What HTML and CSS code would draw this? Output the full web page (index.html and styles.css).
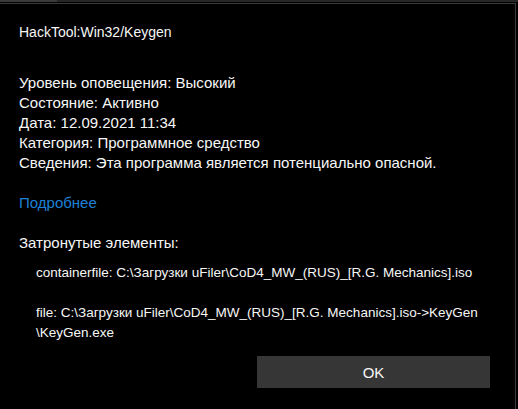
FILE: index.html
```html
<!DOCTYPE html>
<html lang="ru">
<head>
<meta charset="utf-8">
<title>HackTool:Win32/Keygen</title>
<link rel="stylesheet" href="styles.css">
</head>
<body>
<div class="topstrip"><div class="topstrip-left"></div></div>
<div class="dialog">
  <div class="title">HackTool:Win32/Keygen</div>
  <div class="info">
    <div>Уровень оповещения: Высокий</div>
    <div>Состояние: Активно</div>
    <div>Дата: 12.09.2021 11:34</div>
    <div>Категория: Программное средство</div>
    <div>Сведения: Эта программа является потенциально опасной.</div>
  </div>
  <a class="more" href="#">Подробнее</a>
  <div class="heading">Затронутые элементы:</div>
  <div class="items">
    <div class="item">containerfile: C:\Загрузки uFiler\CoD4_MW_(RUS)_[R.G. Mechanics].iso</div>
    <div class="item">file: C:\Загрузки uFiler\CoD4_MW_(RUS)_[R.G. Mechanics].<span class="nowrap">iso-&gt;KeyGen</span><wbr>\KeyGen.exe</div>
  </div>
  <div class="actions"><button class="ok">OK</button></div>
</div>
</body>
</html>
```
FILE: styles.css
```css
html, body {
  margin: 0;
  padding: 0;
  background: #000;
  height: 100%;
  overflow: hidden;
}
body {
  font-family: "Liberation Sans", Arial, sans-serif;
  color: #f7f7f7;
  font-size: 15px;
  line-height: 20px;
}
.topstrip {
  height: 2px;
  background: #262626;
  display: flex;
}
.topstrip-left {
  width: 57px;
  background: #3a3a3a;
}
.dialog {
  margin-top: 1px;
  width: 516px;
  height: 406px;
  border-top: 1px solid #3a3a3a;
  border-right: 1px solid #3a3a3a;
  box-sizing: border-box;
  padding: 18px 0 0 19px;
  display: flex;
  flex-direction: column;
}
.title {
  font-size: 14px;
  margin-bottom: 31px;
}
.info {
  margin-bottom: 20px;
}
.more {
  color: #1e80d6;
  text-decoration: none;
  align-self: flex-start;
  margin-bottom: 20px;
}
.heading {
  margin-bottom: 10px;
}
.items {
  padding-left: 17px;
  width: 445px;
  font-size: 13.5px;
  display: flex;
  flex-direction: column;
  gap: 20px;
}
.nowrap {
  white-space: nowrap;
}
.actions {
  margin-top: 13px;
  display: flex;
  justify-content: flex-end;
  padding-right: 25px;
}
.ok {
  width: 233px;
  height: 32px;
  background: #363636;
  border: none;
  color: #f7f7f7;
  font-family: inherit;
  font-size: 15px;
  padding: 0;
}
```
